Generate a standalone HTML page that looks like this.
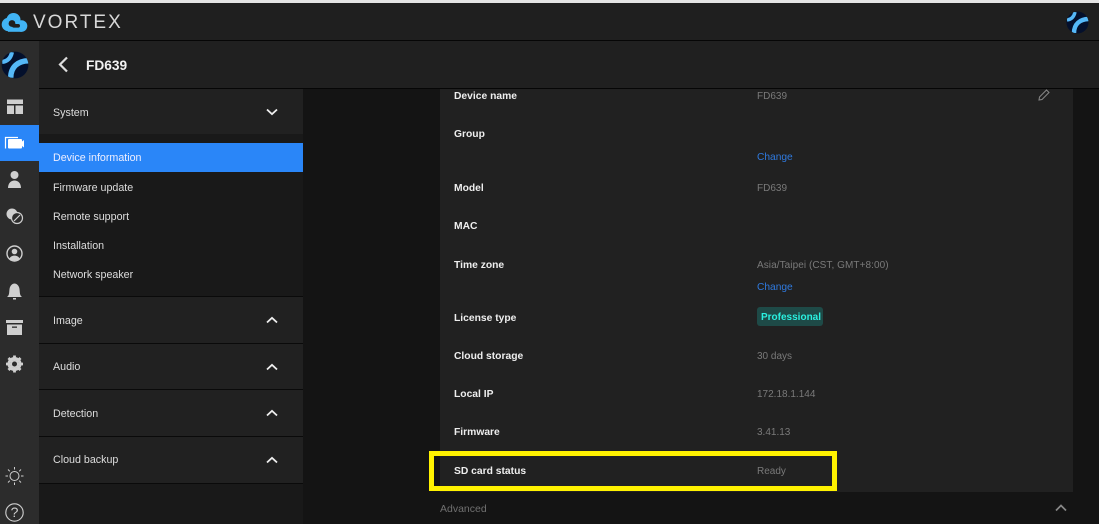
<!DOCTYPE html>
<html><head><meta charset="utf-8">
<style>
html,body{margin:0;padding:0;background:#141414}
#r{position:relative;width:1099px;height:524px;overflow:hidden;background:#141414;font-family:"Liberation Sans",sans-serif;font-size:11px;color:#ddd}
#r div{position:absolute}
.t{white-space:nowrap;line-height:14px}
.l{left:454px;font-weight:bold;color:#eee;font-size:10.3px}
.v{left:757px;color:#7a7a7a;font-size:10px}
.c{left:757px;color:#2f7adf;font-size:10.2px}
.m{left:53px;color:#ddd;font-size:10.7px}
.sec{left:39px;width:264px;background:#212121;border-bottom:1px solid #0a0a0a}
svg{position:absolute;overflow:visible}
</style></head><body><div id="r">
<div style="left:0;top:0;width:1099px;height:3px;background:#e4e4e4"></div>
<div style="left:0;top:3px;width:1099px;height:37px;background:#1f1f1f"></div>
<div style="left:0;top:40px;width:1099px;height:1px;background:#060606"></div>
<div style="left:39px;top:41px;width:1060px;height:47px;background:#202020"></div>
<div style="left:39px;top:88px;width:1060px;height:1px;background:#060606"></div>
<div style="left:0;top:41px;width:39px;height:483px;background:#2c2c2c"></div>

<svg style="left:0;top:0" width="30" height="40" viewBox="0 0 30 40"><circle cx="8.500" cy="24.500" r="6.800" fill="#41b4f5"/><circle cx="13.500" cy="20" r="7" fill="#41b4f5"/><circle cx="21.500" cy="26" r="5.800" fill="#41b4f5"/><rect x="8" y="24" width="14" height="7.800" fill="#41b4f5"/><circle cx="12" cy="23.500" r="3.400" fill="#1f1f1f"/><rect x="12" y="24" width="8" height="3.600" rx="1.800" fill="#1f1f1f"/></svg>
<div class="t" style="left:33px;top:12px;font-size:19px;line-height:22px;letter-spacing:2px;color:#d8d8d8">VORTEX</div>

<svg style="left:0;top:0;width:0;height:0"><defs><clipPath id="cc"><circle cx="11.500" cy="11.500" r="11"/></clipPath></defs></svg>
<svg style="left:1066px;top:11px" width="23" height="23" viewBox="0 0 23 23"><circle cx="11.500" cy="11.500" r="11" fill="#04102c"/><g clip-path="url(#cc)"><path d="M1 9C5 8.500 8 6 9 1" fill="none" stroke="#55b8f8" stroke-width="3.400"/><path d="M8 22C8 13 14 8 23 8" fill="none" stroke="#55b8f8" stroke-width="4.500"/></g></svg>
<svg style="left:1px;top:51px" width="28" height="28" viewBox="0 0 23 23"><circle cx="11.500" cy="11.500" r="11" fill="#04102c"/><g clip-path="url(#cc)"><path d="M1 9C5 8.500 8 6 9 1" fill="none" stroke="#55b8f8" stroke-width="3.400"/><path d="M8 22C8 13 14 8 23 8" fill="none" stroke="#55b8f8" stroke-width="4.500"/></g></svg>

<svg style="left:57px;top:56px" width="12" height="17" viewBox="0 0 12 17"><path d="M10 1.500L3 8.500L10 15.500" fill="none" stroke="#ddd" stroke-width="2.200"/></svg>
<div class="t" style="left:86px;top:57px;font-size:13.700px;line-height:17px;font-weight:bold;color:#f2f2f2">FD639</div>

<div style="left:0;top:125px;width:39px;height:36px;background:#2a86f8"></div>
<svg style="left:0;top:90px" width="39" height="300" viewBox="0 0 39 300">
<path d="M7 9.500H23V14H7ZM7 15.500H14V24H7ZM15.500 15.500H23V24H15.500Z" fill="#cfcfcf"/>
<path d="M5.500 58.500V47.500H18" stroke="#fff" stroke-width="1.200" fill="none"/><rect x="8" y="49" width="14" height="9.500" rx="1" fill="#fff"/><path d="M22 51.500L24 50V57.500L22 56Z" fill="#fff"/>
<circle cx="14.500" cy="85" r="4" fill="#cfcfcf"/><path d="M8 98C8 88 21 88 21 98Z" fill="#cfcfcf"/>
<circle cx="12" cy="124" r="5.500" fill="#cfcfcf"/><circle cx="17" cy="128" r="5.500" fill="#2c2c2c" stroke="#cfcfcf" stroke-width="1.200"/><path d="M14 131L20 125" stroke="#cfcfcf" stroke-width="1.200"/>
<circle cx="14.500" cy="163.500" r="7.500" fill="none" stroke="#cfcfcf" stroke-width="1.400"/><circle cx="14.500" cy="161.500" r="2.800" fill="#cfcfcf"/><path d="M9.500 169C10 164.500 19 164.500 19.500 169C17 171 12 171 9.500 169Z" fill="#cfcfcf"/>
<path d="M7 207C9.500 205 9 203 9.500 199C10 195 13 193.500 14.500 193.500C16 193.500 19 195 19.500 199C20 203 19.500 205 22 207Z" fill="#cfcfcf"/><rect x="13" y="208" width="3" height="1.500" fill="#cfcfcf"/>
<rect x="6" y="230" width="17" height="3" fill="#cfcfcf"/><path d="M7 234.500H22V245H7Z" fill="#cfcfcf"/><rect x="12" y="236.500" width="5" height="1.300" fill="#2c2c2c"/>
<circle cx="14.500" cy="274" r="5.500" fill="none" stroke="#cfcfcf" stroke-width="3"/><path d="M14.500 265.500V282.500M6 274H23M8.500 268L20.500 280M20.500 268L8.500 280" stroke="#cfcfcf" stroke-width="2.800"/><circle cx="14.500" cy="274" r="2.500" fill="#2c2c2c"/>
</svg>
<svg style="left:0;top:460px" width="39" height="64" viewBox="0 0 39 64">
<circle cx="14.500" cy="16" r="4.500" fill="none" stroke="#cfcfcf" stroke-width="1"/><path d="M14.500 7V9.500M14.500 22.500V25M5.500 16H8M21 16H23.500M8 9.500L9.800 11.300M19.200 20.700L21 22.500M21 9.500L19.200 11.300M9.800 20.700L8 22.500" stroke="#cfcfcf" stroke-width="1"/>
<circle cx="14.500" cy="52.500" r="8.700" fill="none" stroke="#cfcfcf" stroke-width="1.100"/>
</svg>
<div class="t" style="left:9px;top:505px;width:11px;text-align:center;font-size:14px;color:#cfcfcf">?</div>

<div style="left:39px;top:89px;width:264px;height:435px;background:#191919"></div>
<div class="sec" style="top:89px;height:45px;border:0"></div>
<div class="sec" style="top:297px;height:46px"></div>
<div class="sec" style="top:344px;height:45px"></div>
<div class="sec" style="top:390px;height:46px"></div>
<div class="sec" style="top:437px;height:46px"></div>
<div style="left:39px;top:296px;width:264px;height:1px;background:#0a0a0a"></div>
<div style="left:39px;top:143px;width:264px;height:29px;background:#2a86f8"></div>

<div class="t m" style="top:106px">System</div>
<div class="t m" style="top:151px;color:#eef">Device information</div>
<div class="t m" style="top:181px">Firmware update</div>
<div class="t m" style="top:210px">Remote support</div>
<div class="t m" style="top:239px">Installation</div>
<div class="t m" style="top:268px">Network speaker</div>
<div class="t m" style="top:314px">Image</div>
<div class="t m" style="top:360px">Audio</div>
<div class="t m" style="top:407px">Detection</div>
<div class="t m" style="top:453px">Cloud backup</div>

<svg style="left:266px;top:108px" width="12" height="8"><path d="M1 1.500L6 6.200L11 1.500" fill="none" stroke="#eee" stroke-width="1.800"/></svg>
<svg style="left:266px;top:316px" width="12" height="8"><path d="M1 6.500L6 1.800L11 6.500" fill="none" stroke="#eee" stroke-width="1.800"/></svg>
<svg style="left:266px;top:363px" width="12" height="8"><path d="M1 6.500L6 1.800L11 6.500" fill="none" stroke="#eee" stroke-width="1.800"/></svg>
<svg style="left:266px;top:409px" width="12" height="8"><path d="M1 6.500L6 1.800L11 6.500" fill="none" stroke="#eee" stroke-width="1.800"/></svg>
<svg style="left:266px;top:456px" width="12" height="8"><path d="M1 6.500L6 1.800L11 6.500" fill="none" stroke="#eee" stroke-width="1.800"/></svg>

<div style="left:303px;top:89px;width:796px;height:435px;background:#141414"></div>
<div style="left:440px;top:89px;width:633px;height:403px;background:#212121"></div>

<div class="t l" style="top:90px">Device name</div><div class="t v" style="top:90px">FD639</div>
<svg style="left:1038px;top:89px" width="12" height="12" viewBox="0 0 12 12"><path d="M1 11L1.500 8L8.500 1L11 3.500L4 10.500Z" fill="none" stroke="#888" stroke-width="1"/></svg>
<div class="t l" style="top:128px">Group</div><div class="t c" style="top:151px">Change</div>
<div class="t l" style="top:182px">Model</div><div class="t v" style="top:182px">FD639</div>
<div class="t l" style="top:220px">MAC</div>
<div class="t l" style="top:259px">Time zone</div><div class="t v" style="top:259px;letter-spacing:.07px">Asia/Taipei (CST, GMT+8:00)</div>
<div class="t c" style="top:281px">Change</div>
<div class="t l" style="top:312px">License type</div>
<div style="left:757px;top:307px;width:66px;height:19px;background:#1e4a47;border-radius:3px"></div>
<div class="t" style="left:761px;top:311px;font-weight:bold;font-size:10px;color:#2af0e0">Professional</div>
<div class="t l" style="top:350px">Cloud storage</div><div class="t v" style="top:350px">30 days</div>
<div class="t l" style="top:388px">Local IP</div><div class="t v" style="top:388px">172.18.1.144</div>
<div class="t l" style="top:426px">Firmware</div><div class="t v" style="top:426px">3.41.13</div>
<div class="t l" style="top:465px">SD card status</div><div class="t v" style="top:465px">Ready</div>

<div style="left:429px;top:451px;width:398px;height:30px;border:5px solid #fff200"></div>
<div class="t" style="left:440px;top:502px;color:#707070;font-size:10.500px">Advanced</div>
<svg style="left:1055px;top:503px" width="12" height="9"><path d="M1 7.500L6 2.500L11 7.500" fill="none" stroke="#888" stroke-width="1.700"/></svg>
</div></body></html>
